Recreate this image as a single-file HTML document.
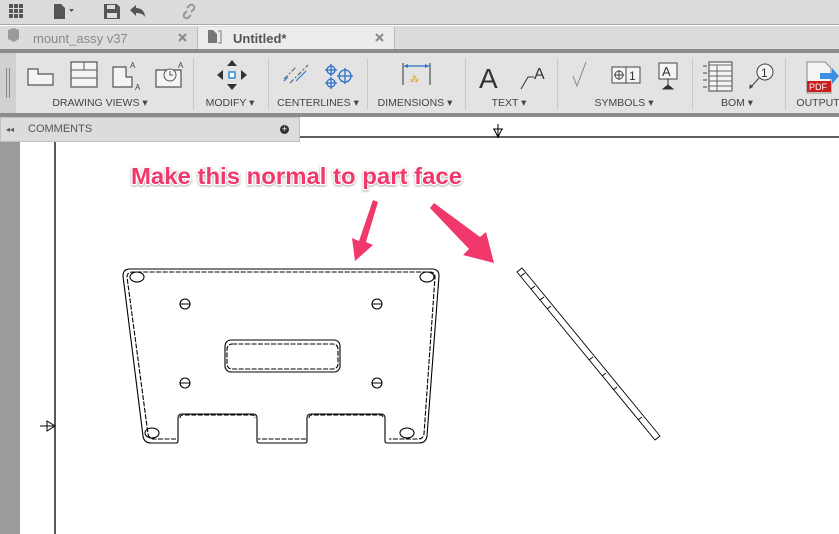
<!DOCTYPE html><html><head><meta charset="utf-8"><style>
*{margin:0;padding:0;box-sizing:border-box}
body{width:839px;height:534px;overflow:hidden;background:#fff;font-family:"Liberation Sans",sans-serif;position:relative}
.a{position:absolute}
.lbl{position:absolute;top:97px;font-size:10.5px;color:#444;white-space:nowrap;transform:translateX(-50%)}
.sep{position:absolute;top:58px;width:1px;height:52px;background:#c8c8c8}
</style></head><body>
<div class="a" style="left:0;top:0;width:839px;height:25px;background:#dcdcdc;border-bottom:1px solid #a9a9a9"></div>
<svg class="a" style="left:0;top:0" width="220" height="25">
<g fill="#555"><rect x="9" y="4" width="4" height="4"/><rect x="14" y="4" width="4" height="4"/><rect x="19" y="4" width="4" height="4"/><rect x="9" y="9" width="4" height="4"/><rect x="14" y="9" width="4" height="4"/><rect x="19" y="9" width="4" height="4"/><rect x="9" y="14" width="4" height="4"/><rect x="14" y="14" width="4" height="4"/><rect x="19" y="14" width="4" height="4"/>
<path d="M54 4h7l4 4v11H54z"/><path d="M69 9h5l-2.5 3z"/>
<path d="M104 4h13l3 3v12h-16z"/><path d="M130 10l6-5v3c5 0 9 3 9 9c-2-3-5-4-9-4v3z"/></g>
<rect x="107" y="5" width="8" height="4" fill="#dcdcdc"/><rect x="107" y="13" width="10" height="5" fill="#dcdcdc"/>
<g fill="none" stroke="#999" stroke-width="2"><path d="M187 11l-3 3a3 3 0 0 0 4 4l3-3M191 12l3-3a3 3 0 0 0-4-4l-3 3"/></g>
</svg>
<div class="a" style="left:0;top:26px;width:839px;height:23px;background:#dcdcdc"></div>
<div class="a" style="left:197px;top:27px;width:198px;height:22px;background:#ececec;border-left:1px solid #bbb;border-right:1px solid #bbb"></div>
<svg class="a" style="left:0;top:26px" width="400" height="23">
<path d="M8 4l6-2 5 2v9l-5 3-6-3z" fill="#9a9a9a"/>
<path d="M208 4h5l4 4v9h-9z" fill="#777"/><path d="M218 5h3v12h-3" fill="none" stroke="#777"/>
<g stroke="#888" stroke-width="2"><path d="M179 8l7 7M186 8l-7 7M376 8l7 7M383 8l-7 7"/></g>
</svg>
<div class="a" style="left:33px;top:31px;font-size:13px;color:#888">mount_assy v37</div>
<div class="a" style="left:233px;top:31px;font-size:13px;color:#555;font-weight:bold">Untitled*</div>
<div class="a" style="left:0;top:49px;width:839px;height:4px;background:#8c8c8c"></div>
<div class="a" style="left:0;top:53px;width:839px;height:61px;background:#e3e3e3"></div>
<div class="a" style="left:0;top:53px;width:16px;height:61px;background:#d0d0d0"></div>
<div class="a" style="left:6px;top:68px;width:4px;height:30px;border-left:1px solid #888;border-right:1px solid #888"></div>
<div class="a" style="left:0;top:113px;width:839px;height:4px;background:#8c8c8c"></div>
<div class="sep" style="left:193px"></div><div class="sep" style="left:268px"></div><div class="sep" style="left:367px"></div><div class="sep" style="left:465px"></div><div class="sep" style="left:557px"></div><div class="sep" style="left:692px"></div><div class="sep" style="left:785px"></div>
<svg class="a" style="left:0;top:53px" width="839" height="44">
<g fill="#f4f4f4" stroke="#555" stroke-width="1.2">
<path d="M28 16h10v5h15v11H28z"/>
<rect x="71" y="9" width="26" height="25"/>
<path d="M113 14h13v10h6v10h-19z"/>
<path d="M156 17h25v17h-25z"/>
</g>
<path d="M71 17h26M71 25h26M84 9v8" stroke="#555" fill="none"/>
<circle cx="170" cy="22" r="6" fill="#f4f4f4" stroke="#555"/><path d="M170 18v4h3" stroke="#555" fill="none"/>
<text x="130" y="15" font-size="8" fill="#444">A</text><text x="135" y="37" font-size="8" fill="#444">A</text><text x="178" y="15" font-size="8" fill="#444">A</text>
<g fill="#333"><path d="M232 7l5 6h-10zM232 37l5-6h-10zM217 22l6-5v10zM247 22l-6-5v10z"/></g>
<rect x="229" y="19" width="6" height="6" fill="#fff" stroke="#2a8bd8" stroke-width="1.5"/>
<path d="M284 26l12-12M290 30l18-18" stroke="#555" stroke-dasharray="5 2 2 2"/>
<path d="M284 28l4-4M296 28l10-10" stroke="#2a7bd0" stroke-width="1.2"/>
<g fill="none" stroke="#2a6fc8" stroke-width="1.3"><circle cx="331" cy="17" r="4"/><circle cx="331" cy="30" r="4"/><circle cx="345" cy="23" r="6"/><path d="M325 17h12M331 11v12M325 30h12M331 24v12M337 23h16M345 15v16"/></g>
<path d="M403 10v22M430 10v22" stroke="#333"/><path d="M404 13h25" stroke="#2a6fc8" stroke-width="1.3"/><path d="M404 13l4-2v4zM429 13l-4-2v4z" fill="#2a6fc8"/>
<text x="410" y="29" font-size="9" fill="#d8a020">⁂</text>
<text x="479" y="35" font-size="28" fill="#333">A</text>
<path d="M521 36l7-12h6" stroke="#333" fill="none"/><text x="534" y="26" font-size="16" fill="#333">A</text>
<path d="M573 23l4 10 9-24" stroke="#888" fill="none"/>
<rect x="612" y="14" width="28" height="16" fill="#f4f4f4" stroke="#444"/><path d="M626 14v16" stroke="#444"/><circle cx="619" cy="22" r="4" fill="none" stroke="#444"/><path d="M614 22h10M619 17v10" stroke="#444"/><text x="629" y="27" font-size="12" fill="#333">1</text>
<rect x="659" y="10" width="18" height="16" fill="#f4f4f4" stroke="#444"/><text x="662" y="23" font-size="13" fill="#333">A</text><path d="M668 26v6M663 36l5-4 5 4z" fill="#333" stroke="#333"/>
<rect x="709" y="9" width="23" height="29" fill="#f4f4f4" stroke="#444"/><path d="M709 12h23M709 18h23M709 23h23M709 28h23M709 33h23M717 12v26" stroke="#666"/><path d="M703 13h4M703 20h4M703 27h4M703 34h4" stroke="#444"/>
<circle cx="765" cy="19" r="8" fill="#f4f4f4" stroke="#444"/><text x="761" y="24" font-size="12" fill="#333">1</text><path d="M759 25l-8 9" stroke="#444"/><path d="M749 36l1-5 3 3z" fill="#444"/>
<path d="M807 9h18l6 6v25h-24z" fill="#f4f4f4" stroke="#888"/><rect x="807" y="28" width="24" height="11" fill="#c81e1e"/><text x="809" y="37" font-size="9" fill="#fff">PDF</text><path d="M820 20h12v-5l7 8-7 8v-5h-12z" fill="#3b8fe0"/>
</svg>
<div class="lbl" style="left:100px">DRAWING VIEWS ▾</div><div class="lbl" style="left:230px">MODIFY ▾</div><div class="lbl" style="left:318px">CENTERLINES ▾</div><div class="lbl" style="left:415px">DIMENSIONS ▾</div><div class="lbl" style="left:509px">TEXT ▾</div><div class="lbl" style="left:624px">SYMBOLS ▾</div><div class="lbl" style="left:737px">BOM ▾</div><div class="lbl" style="left:818px">OUTPUT</div>
<div class="a" style="left:0;top:117px;width:20px;height:417px;background:#9b9b9b"></div>
<div class="a" style="left:0;top:117px;width:300px;height:25px;background:#dcdcdc;border:1px solid #c0c0c0"></div>
<div class="a" style="left:6px;top:125px;font-size:8px;color:#555">◂◂</div>
<div class="a" style="left:28px;top:123px;font-size:11px;color:#555">COMMENTS</div>
<div class="a" style="left:280px;top:125px;width:9px;height:9px;border-radius:50%;background:#333;color:#fff;font-size:9px;line-height:9px;text-align:center">+</div>
<svg class="a" style="left:0;top:0" width="839" height="534">
<path d="M300 137H839M55 142V534" stroke="#000" stroke-width="1.3"/>
<path d="M498 124v14M493 129h10M494 129l4 8 4-8z" fill="none" stroke="#000"/>
<path d="M40 426h15M47 421v10l8-5z" fill="none" stroke="#000"/>
<g fill="none" stroke="#000" stroke-width="1.1">
<path d="M130 269H432q7 0 7 7L427 436q-1 7-8 7H387q-2 0-2-2V418q0-4-4-4H311q-4 0-4 4v23q0 2-2 2H259q-2 0-2-2V418q0-4-4-4H182q-4 0-4 4v23q0 2-2 2H151q-7 0-8-7L123 276q0-7 7-7z"/>
<path d="M176 439H154q-5 0-6-5L127 277q0-5 6-5H430q5 0 5 5L424 434q-1 5-6 5H389M306 439H258M180 418q0-3 3-3H252q3 0 3 3M309 418q0-3 3-3H380q3 0 3 3" stroke-dasharray="5 1.5"/>
<rect x="225" y="340" width="115" height="32" rx="6"/><rect x="227" y="344" width="111" height="25" rx="5" stroke-dasharray="5 1.5"/>
<ellipse cx="185" cy="304" rx="5" ry="5"/><ellipse cx="377" cy="304" rx="5" ry="5"/><ellipse cx="185" cy="383" rx="5" ry="5"/><ellipse cx="377" cy="383" rx="5" ry="5"/>
<path d="M180 304h10M372 304h10M180 383h10M372 383h10"/>
<ellipse cx="137" cy="277" rx="7" ry="5"/><ellipse cx="427" cy="277" rx="7" ry="5"/><ellipse cx="152" cy="433" rx="7" ry="5"/><ellipse cx="407" cy="433" rx="7" ry="5"/>
<path d="M517 272l5-4 138 168-5 4zM521 276l4-3M531 289l4-3M540 300l4-3M547 309l4-3M589 360l4-3M602 376l4-3M613 390l4-3M638 420l4-3" stroke-width="0.9"/>
</g>
<g fill="#f0386b">
<path d="M373 200l5 2-12 40 7 3-18 16-3-23 7 3z"/>
<path d="M430 208l4-5 46 34 6-5 8 31-31-8 6-6z"/>
</g>
<text x="131" y="184" font-size="23.5" font-weight="bold" fill="#f0386b" style="paint-order:stroke;filter:drop-shadow(0 1px 1px rgba(0,0,0,.35))" stroke="#fff" stroke-width="2.5" textLength="331" lengthAdjust="spacingAndGlyphs" font-family="Liberation Sans">Make this normal to part face</text>
</svg>
</body></html>
